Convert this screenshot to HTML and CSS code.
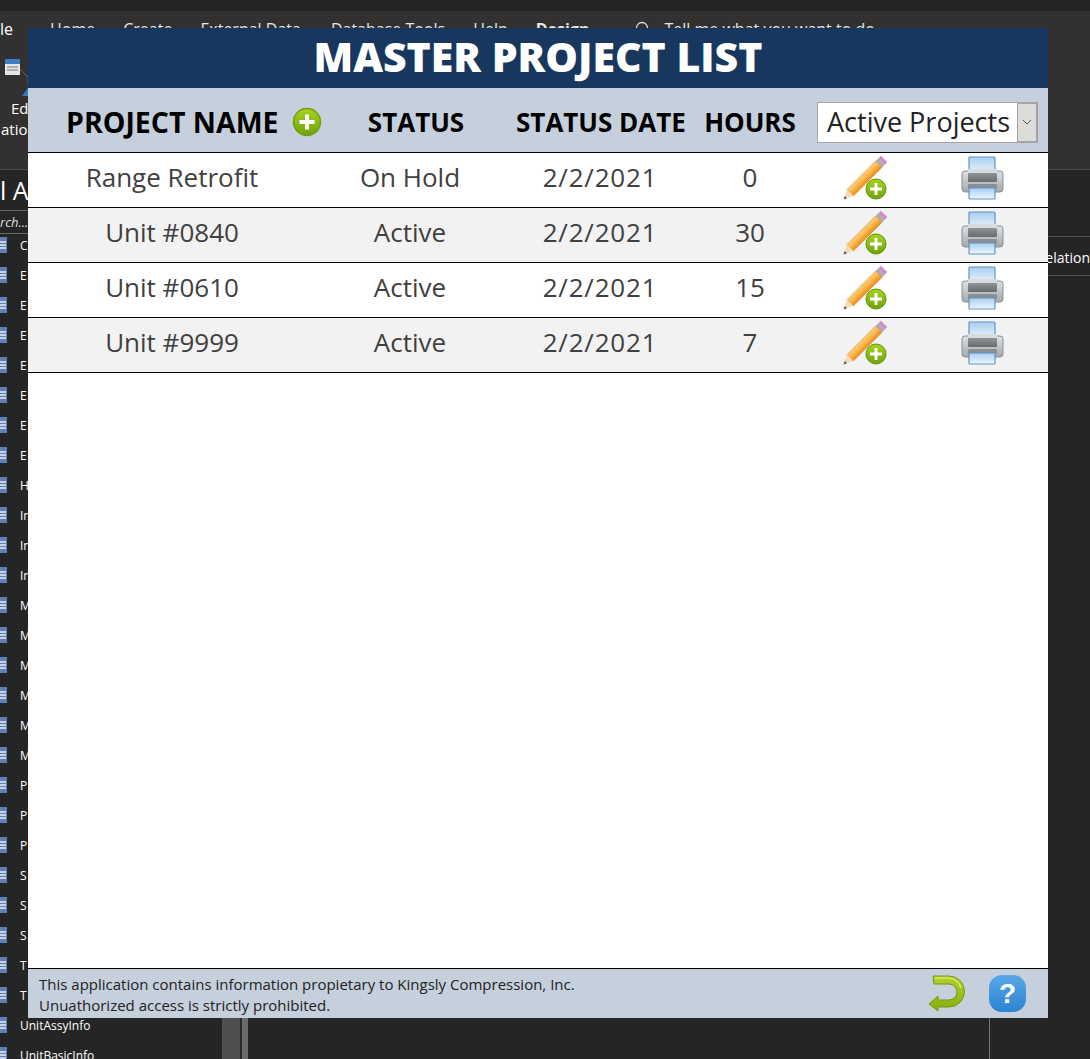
FILE: index.html
```html
<!DOCTYPE html>
<html lang="en">
<head>
    <meta charset="UTF-8">
    <title>Master Project List</title>
    <meta name="viewport" content="width=device-width, initial-scale=1.0">
    <link rel="stylesheet" href="styles.css">
</head>
<body>
    <svg class="defs" width="0" height="0">
        <defs>
            <linearGradient id="greenBall" x1="0" y1="0" x2="0" y2="1">
                <stop offset="0" stop-color="#a9d41e"/>
                <stop offset="1" stop-color="#6ea30a"/>
            </linearGradient>
            <linearGradient id="greenArrow" x1="0" y1="0" x2="0" y2="1">
                <stop offset="0" stop-color="#b4d22a"/>
                <stop offset="1" stop-color="#86ad0e"/>
            </linearGradient>
            <linearGradient id="pencilBody" x1="0" y1="0" x2="1" y2="0">
                <stop offset="0" stop-color="#fcd07a"/>
                <stop offset=".55" stop-color="#f8b144"/>
                <stop offset="1" stop-color="#e98c1c"/>
            </linearGradient>
            <linearGradient id="paper" x1="0" y1="0" x2="0" y2="1">
                <stop offset="0" stop-color="#a9cdf0"/>
                <stop offset="1" stop-color="#eef6fd"/>
            </linearGradient>
            <linearGradient id="printerBody" x1="0" y1="0" x2="0" y2="1">
                <stop offset="0" stop-color="#dfe1e2"/>
                <stop offset="1" stop-color="#a4a8ab"/>
            </linearGradient>
            <linearGradient id="printerBand" x1="0" y1="0" x2="0" y2="1">
                <stop offset="0" stop-color="#8f9497"/>
                <stop offset="1" stop-color="#666b6f"/>
            </linearGradient>
            <symbol id="pencilAdd" viewBox="1 0 44 44" overflow="visible">
                <g transform="rotate(45 22 22)">
                    <path d="M17.500 -5 h9 v4 h-9z" fill="#cf8fc4"/>
                    <path d="M17.500 -1 h9 v3.500 h-9z" fill="#a9adb0"/>
                    <path d="M17.500 2.500 h9 v40.500 h-9z" fill="url(#pencilBody)" stroke="#c9812a" stroke-width=".5"/>
                    <path d="M17.500 43 h9 l-4.500 9z" fill="#f3dcb2"/>
                    <path d="M20.500 49 h3 l-1.500 3.400z" fill="#555"/>
                </g>
                <circle cx="33" cy="33" r="10" fill="url(#greenBall)" stroke="#5f9308"/>
                <path d="M31.500 27 h3 v4.500 h4.500 v3 h-4.500 v4.500 h-3 v-4.500 h-4.500 v-3 h4.500z" fill="#fff"/>
            </symbol>
            <symbol id="printer" viewBox="-1 0 44 44">
                <rect x="8" y="1" width="26" height="17" rx="1" fill="url(#paper)" stroke="#5f95c4" stroke-width="1.2"/>
                <rect x="1" y="15" width="41" height="21" rx="3" fill="url(#printerBody)" stroke="#8b9094"/>
                <rect x="7" y="13" width="29" height="5" fill="#d9dcde"/>
                <rect x="7" y="17" width="29" height="9" rx="1" fill="url(#printerBand)"/>
                <rect x="7" y="28" width="29" height="5" rx="1" fill="#8a8f93"/>
                <rect x="8" y="32" width="26" height="11" rx="1" fill="url(#paper)" stroke="#5f95c4" stroke-width="1.2"/>
            </symbol>
        </defs>
    </svg>

    <!-- access window behind the form -->
    <div class="titlebar"></div>
    <div class="ribbon">
        <div class="tabs">
            <span class="tab file">le</span>
            <span class="tab">Home</span>
            <span class="tab">Create</span>
            <span class="tab wide">External Data</span>
            <span class="tab">Database Tools</span>
            <span class="tab">Help</span>
            <span class="tab strong">Design</span>
            <span class="tell">
                <svg width="16" height="16" viewBox="0 0 16 16"><circle cx="8" cy="7" r="5.500" fill="none" stroke="#ddd" stroke-width="1.300"/></svg>
                Tell me what you want to do
            </span>
        </div>
        <div class="ribbon-tool">
            <svg class="table-icon" width="28" height="40" viewBox="0 0 28 40">
                <rect width="15" height="16" fill="#e6e6e6"/>
                <rect width="15" height="5" fill="#3e7cc4"/>
                <path d="M2 8h11M2 11h11" stroke="#777"/>
                <path d="M15 10l8 8v8" fill="none" stroke="#666"/>
                <path d="M23 29l-6 8h6z" fill="#3a78c0"/>
            </svg>
            <div class="tool-label">Ed</div>
            <div class="tool-label">atio</div>
        </div>
    </div>
    <div class="workspace">
        <aside class="nav-pane">
            <div class="nav-title">l A</div>
            <div class="nav-search">rch...</div>
            <ul class="nav-list" id="navList"></ul>
        </aside>
        <div class="splitter"></div>
        <div class="doc-area">
            <div class="doc-tab">elation</div>
            <div class="doc-rule"></div>
        </div>
    </div>

    <!-- the form itself -->
    <div class="form">
        <h1 class="form-title">MASTER PROJECT LIST</h1>
        <div class="grid head">
            <div class="name-head">
                <span class="name-label">PROJECT NAME</span>
                <svg width="30" height="30" viewBox="0 0 30 30">
                    <circle cx="15" cy="15" r="13.500" fill="url(#greenBall)" stroke="#6f9f10" stroke-width="1.400"/>
                    <path d="M13 7.500 h4 v5.500 h5.500 v4 h-5.500 v5.500 h-4 v-5.500 h-5.500 v-4 h5.500z" fill="#fff"/>
                </svg>
            </div>
            <div>STATUS</div>
            <div>STATUS DATE</div>
            <div>HOURS</div>
            <div class="filter">
                <span class="filter-value">Active Projects</span>
                <span class="filter-arrow">
                    <svg width="10" height="6" viewBox="0 0 10 6"><path d="M1 1l4 4 4-4" fill="none" stroke="#555" stroke-width="1"/></svg>
                </span>
            </div>
        </div>
        <div id="rows"></div>
        <div class="spacer"></div>
        <div class="form-foot">
            <p class="notice">This application contains information propietary to Kingsly Compression, Inc.<br>Unuathorized access is strictly prohibited.</p>
            <div class="foot-icons">
                <svg width="38" height="38" viewBox="0 0 38 38">
                    <path d="M5 1 H21 A15.500 15.500 0 0 1 21 32 H10 V36 L1 29 L10 21 V25 H21 A8 8 0 0 0 21 9 H6z" fill="url(#greenArrow)" stroke="#76990c" stroke-width="1"/>
                    <path d="M7 3 H21 A13 13 0 0 1 33 13" fill="none" stroke="#d3e86e" stroke-width="1.500"/>
                </svg>
                <div class="help-btn">?</div>
            </div>
        </div>
    </div>

    <script>
        const projects = [
            { name: 'Range Retrofit', status: 'On Hold', date: '2/2/2021', hours: 0 },
            { name: 'Unit #0840', status: 'Active', date: '2/2/2021', hours: 30 },
            { name: 'Unit #0610', status: 'Active', date: '2/2/2021', hours: 15 },
            { name: 'Unit #9999', status: 'Active', date: '2/2/2021', hours: 7 }
        ];

        const rows = document.getElementById('rows');
        projects.forEach((p, i) => {
            const row = document.createElement('div');
            row.className = 'grid row' + (i % 2 ? ' alt' : '');
            row.innerHTML = `
                <div>${p.name}</div>
                <div class="cell-status">${p.status}</div>
                <div class="cell-date">${p.date}</div>
                <div>${p.hours}</div>
                <div><svg width="44" height="44"><use href="#pencilAdd"/></svg></div>
                <div><svg width="44" height="44"><use href="#printer"/></svg></div>
            `;
            rows.appendChild(row);
        });

        const navList = document.getElementById('navList');
        const letters = ['C', 'E', 'E', 'E', 'E', 'E', 'E', 'E', 'H', 'In', 'In', 'In', 'M', 'M', 'M', 'M', 'M', 'M', 'P', 'P', 'P', 'S', 'S', 'S', 'T', 'T', 'UnitAssyInfo', 'UnitBasicInfo'];
        letters.forEach(text => {
            const item = document.createElement('li');
            item.innerHTML = `
                <svg width="7" height="16" viewBox="0 0 7 16">
                    <rect width="7" height="16" fill="#5f7fb5"/>
                    <path d="M0 5h6M0 8h6M0 11h6" stroke="#e8eef8" stroke-width="1.600"/>
                </svg>
                <span>${text}</span>
            `;
            navList.appendChild(item);
        });
    </script>
</body>
</html>
```

FILE: styles.css
```css
* {
    box-sizing: border-box;
}

html, body {
    height: 100%;
}

body {
    margin: 0;
    height: 1059px;
    overflow: hidden;
    position: relative;
    background: #252525;
    color: #fff;
    font-family: 'Open Sans', 'Liberation Sans', sans-serif;
    display: flex;
    flex-direction: column;
}

.defs {
    position: absolute;
}

/* access window */
.titlebar {
    height: 11px;
    flex: none;
    background: #252423;
}

.ribbon {
    height: 159px;
    flex: none;
    background: #323130;
    border-bottom: 1px solid #4a4a4a;
}

.tabs {
    display: flex;
    align-items: center;
    height: 36px;
    font-size: 16px;
    color: #e6e6e6;
}

.tab {
    margin-right: 28px;
    white-space: nowrap;
}

.tab.wide {
    margin-right: 30px;
}

.tab.file {
    width: 22px;
    color: #fff;
}

.tab.strong {
    font-weight: 700;
    margin-right: 45px;
}

.tell {
    display: flex;
    align-items: center;
    gap: 14px;
    white-space: nowrap;
}

.ribbon-tool {
    padding: 12px 0 0 5px;
}

.table-icon {
    display: block;
}

.tool-label {
    font-size: 15px;
    line-height: 21px;
    margin-left: 6px;
}

.tool-label:first-of-type {
    margin-top: -1px;
}

.tool-label + .tool-label {
    margin-left: -4px;
}

.workspace {
    flex: 1;
    display: flex;
    min-height: 0;
}

.nav-pane {
    width: 222px;
    flex: none;
    overflow: hidden;
}

.nav-title {
    font-size: 25px;
    line-height: 40px;
    white-space: nowrap;
}

.nav-search {
    height: 24px;
    border-top: 1px solid #666;
    border-bottom: 1px solid #666;
    font-size: 13px;
    font-style: italic;
    line-height: 22px;
    color: #ddd;
}

.nav-list {
    list-style: none;
    margin: -4px 0 0;
    padding: 0;
}

.nav-list li {
    height: 30px;
    display: flex;
    align-items: center;
    gap: 13px;
    font-size: 12px;
    white-space: nowrap;
}

.splitter {
    width: 26px;
    flex: none;
    background: linear-gradient(90deg, #4f4f4f 0 18px, #2a2a2a 18px 20px, #6b6b6b 20px);
}

.doc-area {
    flex: 1;
    padding-top: 66px;
    position: relative;
}

.doc-tab {
    height: 40px;
    line-height: 41px;
    border-top: 1px solid #555;
    border-bottom: 1px solid #555;
    text-align: right;
    font-size: 14px;
}

.doc-rule {
    position: absolute;
    left: 741px;
    top: 0;
    bottom: 0;
    width: 1px;
    background: #777;
}

/* form */
.form {
    position: absolute;
    left: 28px;
    top: 28px;
    width: 1020px;
    height: 990px;
    background: #fff;
    color: #404040;
    display: flex;
    flex-direction: column;
}

.form-title {
    margin: 0;
    height: 60px;
    flex: none;
    background: #17375e;
    color: #fff;
    font-size: 41px;
    font-weight: 800;
    line-height: 57px;
    text-align: center;
}

.grid {
    display: grid;
    grid-template-columns: 288px 200px 168px 132px 100px 132px;
    align-items: center;
    text-align: center;
}

.head {
    height: 65px;
    flex: none;
    padding-top: 4px;
    background: #c5d0dc;
    border-bottom: 1px solid #000;
    color: #000;
    font-size: 26px;
    font-weight: 700;
    white-space: nowrap;
}

.name-head {
    display: flex;
    align-items: center;
    gap: 13px;
    padding-left: 38px;
}

.name-head svg {
    flex: none;
}

.name-label {
    font-size: 28.500px;
}

.filter {
    grid-column: 5 / 7;
    width: 221px;
    height: 41px;
    margin-left: 1px;
    display: flex;
    background: #fff;
    border: 1px solid #a5a5a5;
    font-size: 27px;
    font-weight: 400;
    color: #222;
}

.filter-value {
    flex: 1;
    line-height: 37px;
    text-align: left;
    padding-left: 9px;
}

.filter-arrow {
    width: 20px;
    display: flex;
    align-items: center;
    justify-content: center;
    background: #dcdcdc;
    border: 1px solid #a5a5a5;
}

.row {
    height: 55px;
    padding-bottom: 6px;
    border-bottom: 1px solid #000;
    font-size: 26px;
}

.row svg {
    display: block;
    margin: 2px auto 0;
    overflow: visible;
}

.row.alt {
    background: #f2f2f2;
}

.cell-status {
    padding-right: 12px;
}

.cell-date {
    letter-spacing: 0.8px;
}

.spacer {
    flex: 1;
}

.form-foot {
    height: 50px;
    flex: none;
    display: flex;
    justify-content: space-between;
    align-items: center;
    background: #c5d0dc;
    border-top: 1px solid #000;
    color: #222;
}

.notice {
    margin: 0;
    padding: 2px 0 0 11px;
    font-size: 15px;
    line-height: 21px;
}

.foot-icons {
    display: flex;
    align-items: center;
    gap: 23px;
    padding-right: 22px;
}

.help-btn {
    width: 37px;
    height: 37px;
    border-radius: 13px;
    background: linear-gradient(#58a8e6, #2a84d2);
    color: #fff;
    font-family: 'Liberation Sans', sans-serif;
    font-size: 28px;
    font-weight: 700;
    line-height: 37px;
    text-align: center;
}
```
